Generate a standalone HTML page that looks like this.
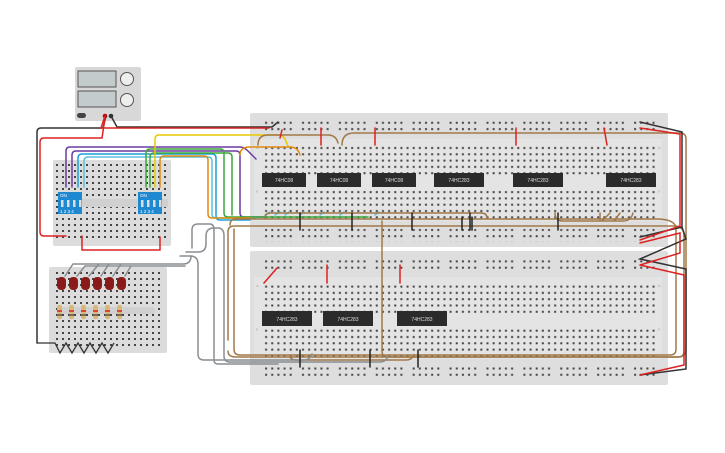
<!DOCTYPE html>
<html><head><meta charset="utf-8"><style>
html,body{margin:0;padding:0;background:#fff;width:725px;height:453px;overflow:hidden}
svg{display:block}
text{font-family:"Liberation Sans",sans-serif}
</style></head><body>
<svg width="725" height="453" viewBox="0 0 725 453">
<defs>
<pattern id="h" x="263" y="0" width="6.15" height="6.3" patternUnits="userSpaceOnUse"><rect x="2.1" y="2.1" width="2" height="2" fill="#444"/></pattern>
<pattern id="r" x="263" y="0" width="36.9" height="6.3" patternUnits="userSpaceOnUse">
<rect x="2.1" y="2.1" width="2" height="2" fill="#444"/><rect x="8.25" y="2.1" width="2" height="2" fill="#444"/><rect x="14.4" y="2.1" width="2" height="2" fill="#444"/><rect x="20.55" y="2.1" width="2" height="2" fill="#444"/><rect x="26.7" y="2.1" width="2" height="2" fill="#444"/></pattern>
<pattern id="s" x="0" y="0" width="6" height="6" patternUnits="userSpaceOnUse"><rect x="2" y="2" width="2" height="2" fill="#444"/></pattern>
</defs>

<rect x="250" y="113" width="418" height="134" rx="2" fill="#dedede"/>
<rect x="250" y="251" width="418" height="134" rx="2" fill="#dedede"/>
<g fill="#e4e4e4"><rect x="254" y="139" width="408" height="82"/><rect x="254" y="277" width="408" height="82"/></g>
<rect x="263" y="118.9" width="392" height="12.6" fill="url(#r)"/>
<rect x="263" y="228.9" width="392" height="12.6" fill="url(#r)"/>
<rect x="263" y="256.9" width="392" height="12.6" fill="url(#r)"/>
<rect x="263" y="365.9" width="392" height="12.6" fill="url(#r)"/>
<rect x="263" y="143.7" width="392" height="31.5" fill="url(#h)"/>
<rect x="263" y="187.9" width="392" height="31.5" fill="url(#h)"/>
<rect x="263" y="281.7" width="392" height="31.5" fill="url(#h)"/>
<rect x="263" y="325.9" width="392" height="31.5" fill="url(#h)"/>
<g font-size="4" fill="#aaa"><text x="256" y="149">A</text><text x="256" y="193">F</text><text x="256" y="287">A</text><text x="256" y="331">F</text>
<text x="658" y="149">A</text><text x="658" y="193">F</text><text x="658" y="287">A</text><text x="658" y="331">F</text></g>
<g fill="#2b2b2b">
<rect x="262" y="173" width="44" height="14"/><rect x="317" y="173" width="44" height="14"/><rect x="372" y="173" width="44" height="14"/>
<rect x="434" y="173" width="50" height="14"/><rect x="513" y="173" width="50" height="14"/><rect x="606" y="173" width="50" height="14"/>
<rect x="262" y="311" width="50" height="15"/><rect x="323" y="311" width="50" height="15"/><rect x="397" y="311" width="50" height="15"/>
</g>
<g fill="#ddd" font-size="5" text-anchor="middle">
<text x="284" y="182">74HC08</text><text x="339" y="182">74HC08</text><text x="394" y="182">74HC08</text>
<text x="459" y="182">74HC283</text><text x="538" y="182">74HC283</text><text x="631" y="182">74HC283</text>
<text x="287" y="321">74HC283</text><text x="348" y="321">74HC283</text><text x="422" y="321">74HC283</text>
</g>

<rect x="75" y="67" width="66" height="54" rx="2" fill="#d8d8d8"/>
<rect x="78" y="71" width="38" height="16" fill="#c4cbcc" stroke="#555" stroke-width="1"/>
<rect x="78" y="91" width="38" height="16" fill="#c4cbcc" stroke="#555" stroke-width="1"/>
<circle cx="127" cy="79" r="6.5" fill="#eee" stroke="#555"/><circle cx="127" cy="100" r="6.5" fill="#eee" stroke="#555"/>
<rect x="77" y="113" width="9" height="5" rx="2.5" fill="#444"/>
<circle cx="105" cy="116" r="2.3" fill="#c00"/><circle cx="111" cy="116" r="2.3" fill="#333"/>

<rect x="53" y="160" width="118" height="86" rx="2" fill="#dcdcdc"/>
<rect x="56" y="164" width="112" height="78" fill="url(#s)"/>
<rect x="60" y="199" width="108" height="8" fill="#d0d0d0"/>
<rect x="58" y="192" width="24" height="22" fill="#1e88d0"/><rect x="138" y="192" width="24" height="22" fill="#1e88d0"/>
<g fill="#fff" font-size="4.5"><text x="60" y="197">ON</text><text x="140" y="197">ON</text><text x="60" y="213">1 2 3 4</text><text x="140" y="213">1 2 3 4</text></g>
<g fill="#ddd"><rect x="61" y="200" width="2.5" height="7"/><rect x="67" y="200" width="2.5" height="7"/><rect x="73" y="200" width="2.5" height="7"/><rect x="79" y="200" width="2.5" height="7"/>
<rect x="141" y="200" width="2.5" height="7"/><rect x="147" y="200" width="2.5" height="7"/><rect x="153" y="200" width="2.5" height="7"/><rect x="159" y="200" width="2.5" height="7"/></g>

<rect x="49" y="267" width="118" height="86" rx="2" fill="#dcdcdc"/>
<rect x="52" y="270" width="112" height="80" fill="url(#s)"/>
<rect x="60" y="307" width="95" height="7" rx="3" fill="#d0d0d0"/>
<g fill="#8b1a1a">
<rect x="57" y="277" width="9" height="13" rx="4"/><rect x="69" y="277" width="9" height="13" rx="4"/><rect x="81" y="277" width="9" height="13" rx="4"/>
<rect x="93" y="277" width="9" height="13" rx="4"/><rect x="105" y="277" width="9" height="13" rx="4"/><rect x="117" y="277" width="9" height="13" rx="4"/></g>
<g fill="#d8b878">
<rect x="57" y="305" width="5" height="14" rx="2"/><rect x="69" y="305" width="5" height="14" rx="2"/><rect x="81" y="305" width="5" height="14" rx="2"/>
<rect x="93" y="305" width="5" height="14" rx="2"/><rect x="105" y="305" width="5" height="14" rx="2"/><rect x="117" y="305" width="5" height="14" rx="2"/></g>
<g stroke="#d00" stroke-width="1.2"><path d="M57 311h5M69 311h5M81 311h5M93 311h5M105 311h5M117 311h5"/></g>
<g stroke="#222" stroke-width="1"><path d="M57 315h5M69 315h5M81 315h5M93 315h5M105 315h5M117 315h5"/></g>
<path d="M37 343h18l5 10 6-10 6 10 6-10 6 10 6-10 6 10 6-10 6 10 6-10" fill="none" stroke="#333" stroke-width="1.3"/>

<g fill="none" stroke-width="1.5" stroke-linecap="round">
<path d="M37 343V132q0-4 4-4h62l3-12" stroke="#333"/>
<path d="M111 116l6 11h155l6-5" stroke="#333"/>
<path d="M105 116l-4 12h168" stroke="#d22"/>
<path d="M105 118l-3 20h-58q-4 0-4 4v90q0 4 4 4h22" stroke="#d22"/>
<path d="M82 236v14h78v-13" stroke="#d22"/>
<path d="M66 187v-36q0-4 4-4h170q4 0 8 4l8 8" stroke="#6a3aa0"/>
<path d="M72 187v-32q0-4 4-4h160q4 0 4 4v58q0 4 4 4h20" stroke="#6a3aa0"/>
<path d="M78 187v-29q0-4 4-4h130q4 0 4 4v58q0 4 4 4h30" stroke="#1aa0d8"/>
<path d="M84 187v-26q0-4 4-4h120q4 0 4 4v53q0 4 4 4h40" stroke="#5bc0e0"/>
<path d="M146 187v-34q0-4 4-4h70q4 0 4 4v60q0 4 4 4h140" stroke="#3aa83a"/>
<path d="M150 187v-30q0-4 4-4h74q4 0 4 4v58" stroke="#3aa83a"/>
<path d="M155 187v-48q0-4 4-4h120q4 0 6 4l3 7" stroke="#e8c800"/>
<path d="M160 187v-27q0-4 4-4h40q4 0 4 4v54q0 4 4 4h40" stroke="#e08a10"/>
<path d="M240 155q0-8 10-8h40q8 0 10 8" stroke="#e08a10"/>
<path d="M265 215l5-3M275 215l5-3M285 215l4-3M300 215l4-3M320 215l4-3M340 215l4-3M375 215l4-3" stroke="#5bc0e0"/>
<path d="M258 145q0-10 10-10h60q8 0 10 8" stroke="#a07848"/>
<path d="M342 145q0-12 12-12h326q6 0 6 6v210q0 8-8 8h-290q-6 0-6-6v-130" stroke="#a07848"/>
<path d="M230 225q0-6 6-6h420q20 0 20 10v120q0 6-6 6H240q-6 0-6-6v-120" stroke="#a07848"/>
<path d="M228 340V232q0-6 6-6h440q10 0 10 10v115q0 6-6 6H236q-8 0-8-6" stroke="#a07848"/>
<path d="M265 218q0-5 6-5h210q6 0 6 5" stroke="#a07848"/>
<path d="M555 213q0 8 8 8h60q8 0 10-8M600 213v8M610 213l-8 8M620 213l-6 8" stroke="#a07848"/>
<path d="M290 355q0 5 6 5h110q6 0 8-5" stroke="#a07848"/>
<path d="M65 276l8-12h110q8 0 8-8M77 276l8-10h100M89 276l10-12M101 276l8-12M113 276l8-12M125 276l6-10" stroke="#8a8e92"/>
<path d="M180 256h10q8 0 8 8v90q0 6 6 6h100q6 0 8-6" stroke="#8a8e92"/>
<path d="M186 252h12q8 0 8-8v-8q0-8 8-8h4q6 0 6 8v120q0 6 6 6h150q6 0 8-6" stroke="#8a8e92"/>
<path d="M192 248v-18q0-6 6-6h12q4 0 4 6v130q0 4 4 4h60" stroke="#8a8e92"/>
<path d="M282 130l-2 8M375 128v17M516 128v17M604 128l3 17M321 128v17M277 268l-13 15M327 265v18M400 265v18" stroke="#d22"/>
<path d="M300 213v17M352 213v17M412 213v17M470 213v17M558 213v17M300 350v17M370 350v17M418 350v17M462 217v13M472 217v13" stroke="#222"/>
<path d="M640 122l42 10v95l-42 10M640 237l42-10 4 12-46 20 46 10v100l-46 6" stroke="#333"/>
<path d="M640 128l40 6v92l-40 14M640 243l40-10v20l-40 12M640 265l44 10v90l-44 10" stroke="#d22"/>
</g>
</svg>
</body></html>
